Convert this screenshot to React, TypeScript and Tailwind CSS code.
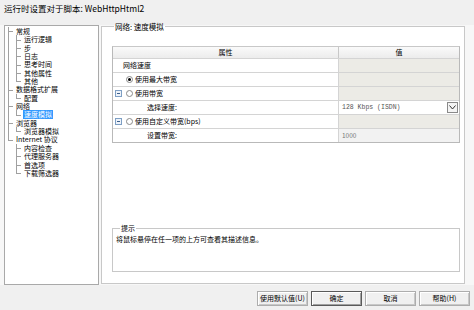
import React from "react";

type TreeItem = {
  label: string;
  level: 0 | 1;
  last: boolean;
  parentLast?: boolean;
  selected?: boolean;
};

const tree: TreeItem[] = [
  { label: "常规", level: 0, last: false },
  { label: "运行逻辑", level: 1, last: false },
  { label: "步", level: 1, last: false },
  { label: "日志", level: 1, last: false },
  { label: "思考时间", level: 1, last: false },
  { label: "其他属性", level: 1, last: false },
  { label: "其他", level: 1, last: true },
  { label: "数据格式扩展", level: 0, last: false },
  { label: "配置", level: 1, last: true },
  { label: "网络", level: 0, last: false },
  { label: "速度模拟", level: 1, last: true, selected: true },
  { label: "浏览器", level: 0, last: false },
  { label: "浏览器模拟", level: 1, last: true },
  { label: "Internet 协议", level: 0, last: true },
  { label: "内容检查", level: 1, last: false, parentLast: true },
  { label: "代理服务器", level: 1, last: false, parentLast: true },
  { label: "首选项", level: 1, last: false, parentLast: true },
  { label: "下载筛选器", level: 1, last: true, parentLast: true },
];

function Branch({ last }: { last: boolean }) {
  return (
    <span className="relative w-[6px] shrink-0 self-stretch">
      <span
        className={
          last
            ? "absolute left-0 top-0 h-1/2 border-l border-[#a0a0a0]"
            : "absolute left-0 top-0 h-full border-l border-[#a0a0a0]"
        }
      />
      <span className="absolute left-0 top-1/2 w-[5px] border-t border-[#a0a0a0]" />
    </span>
  );
}

function Pipe({ show }: { show: boolean }) {
  return (
    <span className="relative w-[8px] shrink-0 self-stretch">
      {show && <span className="absolute left-0 top-0 h-full border-l border-[#a0a0a0]" />}
    </span>
  );
}

function Radio({ checked }: { checked?: boolean }) {
  return (
    <span className="flex h-[7px] w-[7px] items-center justify-center rounded-full border border-[#8a8a8a] bg-white">
      {checked && <span className="h-[3px] w-[3px] rounded-full bg-black" />}
    </span>
  );
}

function Minus() {
  return (
    <span className="flex h-[7px] w-[7px] items-center justify-center border border-[#7e9fc4] bg-[#eef3fa]">
      <span className="w-[3px] border-t border-[#3b5f8c]" />
    </span>
  );
}

function Row({
  children,
  value,
  valueClass,
}: {
  children: React.ReactNode;
  value?: React.ReactNode;
  valueClass: string;
}) {
  return (
    <div className="flex h-[14px] border-t border-[#d4d4d4]">
      <div className="flex w-[225px] items-center bg-white">{children}</div>
      <div className={`flex flex-1 items-center border-l border-[#d4d4d4] ${valueClass}`}>{value}</div>
    </div>
  );
}

function Button({ label, def }: { label: string; def?: boolean }) {
  return (
    <button
      className={
        def
          ? "h-[15px] w-[51px] border border-[#5a5a5a] bg-[#f0f0f0] text-[7px] leading-none text-black shadow-[inset_1px_1px_0_#ffffff,inset_-1px_-1px_0_#a0a0a0]"
          : "h-[15px] w-[51px] border border-[#adadad] bg-[#f0f0f0] text-[7px] leading-none text-black shadow-[inset_1px_1px_0_#ffffff,inset_-1px_-1px_0_#c8c8c8]"
      }
    >
      {label}
    </button>
  );
}

export default function App() {
  return (
    <div
      className="flex h-[310px] w-[474px] flex-col bg-[#f0f0f0] text-[7px] text-black"
      style={{ fontFamily: '"Noto Sans CJK SC", "Noto Sans", sans-serif' }}
    >
      <div className="h-[25px] px-[4px] pt-[1px] text-[8.5px] leading-[14px]">
        运行时设置对于脚本: WebHttpHtml2
      </div>

      <div className="flex h-[260px] gap-[2px] bg-[#f7f7f7] px-[4px]">
        {/* tree */}
        <div className="w-[95px] border border-[#a9a9a9] bg-white pt-[1px]">
          {tree.map((t) => (
            <div key={t.label} className="flex h-[8.35px] pl-[3px] leading-[8.35px]">
              {t.level === 1 && <Pipe show={!t.parentLast} />}
              <Branch last={t.last} />
              <span
                className={
                  t.selected
                    ? "ml-[1px] bg-[#3399ff] px-[1px] text-white"
                    : "ml-[1px] px-[1px]"
                }
              >
                {t.label}
              </span>
            </div>
          ))}
        </div>

        {/* right page */}
        <div className="flex flex-1 flex-col pr-[5px]">
          <fieldset className="-mt-[3px] mb-[1px] flex flex-1 flex-col border border-[#c8c8c8] bg-white pl-[10px] pr-[4px]">
            <legend className="ml-[2px] px-[1px] text-[7.5px] leading-[9px]">网络: 速度模拟</legend>

            <div className="mt-[15px] flex flex-col border border-[#b9b9b9] border-t-[#c8c8c8]">
              <div className="flex h-[11px] bg-gradient-to-b from-[#fafafa] to-[#ececec] leading-[11px]">
                <div className="w-[225px] text-center">属性</div>
                <div className="flex-1 border-l border-[#c8c8c8] text-center">值</div>
              </div>
              <Row valueClass="bg-[#ecebe6]">
                <span className="pl-[10px]">网络速度</span>
              </Row>
              <Row valueClass="bg-[#ecebe6]">
                <span className="ml-[13px]">
                  <Radio checked />
                </span>
                <span className="ml-[2px]">使用最大带宽</span>
              </Row>
              <Row valueClass="bg-[#ecebe6]">
                <span className="ml-[2px]">
                  <Minus />
                </span>
                <span className="ml-[4px]">
                  <Radio />
                </span>
                <span className="ml-[2px]">使用带宽</span>
              </Row>
              <Row
                valueClass="bg-white"
                value={
                  <>
                    <span
                      className="flex-1 pl-[3px] text-[6.5px] text-[#555]"
                      style={{ fontFamily: '"Liberation Mono", monospace' }}
                    >
                      128 Kbps (ISDN)
                    </span>
                    <span className="mr-[1px] flex h-[11px] w-[11px] items-center justify-center border border-[#8a8a8a] bg-[#f4f4f4]">
                      <svg width="7" height="5" viewBox="0 0 7 5">
                        <path d="M0.5 0.5 L3.5 4 L6.5 0.5" fill="none" stroke="#333" strokeWidth="1" />
                      </svg>
                    </span>
                  </>
                }
              >
                <span className="pl-[34px]">选择速度:</span>
              </Row>
              <Row valueClass="bg-[#ecebe6]">
                <span className="ml-[2px]">
                  <Minus />
                </span>
                <span className="ml-[4px]">
                  <Radio />
                </span>
                <span className="ml-[2px]">使用自定义带宽(bps)</span>
              </Row>
              <Row
                valueClass="bg-[#f2f2f2]"
                value={<span className="pl-[3px] text-[6.5px] text-[#777]">1000</span>}
              >
                <span className="pl-[34px]">设置带宽:</span>
              </Row>
            </div>

            <div className="flex-1" />

            <fieldset className="mb-[11px] h-[48px] border border-[#c8c8c8] px-[3px]">
              <legend className="ml-[4px] px-[1px] text-[7px] leading-[8px]">提示</legend>
              <div className="mt-[3px] leading-[9px]">将鼠标悬停在任一项的上方可查看其描述信息。</div>
            </fieldset>
          </fieldset>
        </div>
      </div>

      <div className="flex flex-1 items-center justify-end gap-[3px] pr-[4px] pt-[1px]">
        <Button label="使用默认值(U)" />
        <Button label="确定" def />
        <Button label="取消" />
        <Button label="帮助(H)" />
      </div>
    </div>
  );
}
